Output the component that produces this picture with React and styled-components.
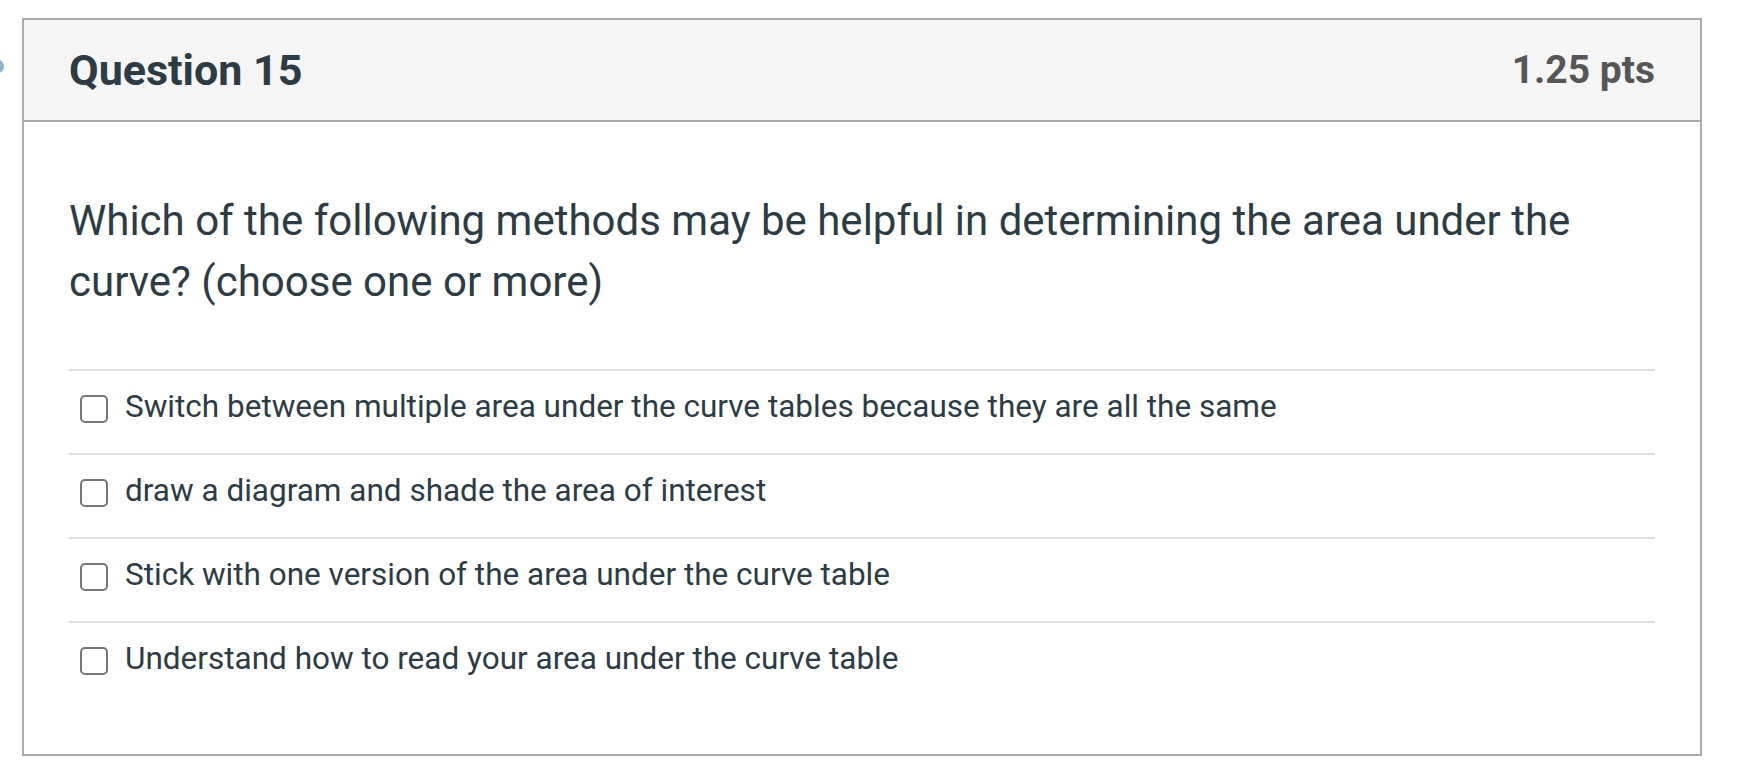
import styled, { createGlobalStyle } from 'styled-components';

const GlobalStyle = createGlobalStyle`
  html, body {
    margin: 0;
    padding: 0;
    background: #fff;
    font-family: Roboto, "Liberation Sans", sans-serif;
  }
`;

const Page = styled.div`
  position: relative;
  padding: 18px 0 0 22px;
`;

const EdgeMark = styled.span`
  position: absolute;
  left: -8px;
  top: 60px;
  width: 12px;
  height: 13px;
  border-radius: 50%;
  background: #8fb3cf;
`;

const Card = styled.section`
  width: 1680px;
  box-sizing: border-box;
  border: 2px solid #aaaaaa;
  background: #fff;
`;

const Header = styled.header`
  height: 100px;
  box-sizing: content-box;
  background: #f5f5f5;
  border-bottom: 2px solid #aaaaaa;
  padding: 0 45px;
  display: flex;
  align-items: center;
  justify-content: space-between;
`;

const Title = styled.h2`
  margin: 0;
  font-size: 43px;
  font-weight: 700;
  color: #2d3b45;
`;

const Points = styled.span`
  font-size: 39px;
  font-weight: 700;
  color: #565656;
`;

const Body = styled.div`
  padding: 68px 45px 49px;
`;

const QuestionText = styled.p`
  margin: 0 0 57px;
  font-size: 42px;
  line-height: 61px;
  color: #2d3b45;
`;

const Answers = styled.ul`
  list-style: none;
  margin: 0;
  padding: 0;
`;

const Answer = styled.li`
  height: 76px;
  padding-bottom: 6px;
  border-top: 2px solid #dddddd;
  display: flex;
  align-items: center;
  gap: 17px;
  padding-left: 11px;
  font-size: 31.5px;
  color: #2d3b45;
`;

const Box = styled.span`
  width: 28px;
  height: 28px;
  box-sizing: border-box;
  border: 2.5px solid #767676;
  border-radius: 5px;
  flex-shrink: 0;
`;

const Label = styled.span`
  margin-bottom: 6px;
`;

const answers = [
  'Switch between multiple area under the curve tables because they are all the same',
  'draw a diagram and shade the area of interest',
  'Stick with one version of the area under the curve table',
  'Understand how to read your area under the curve table',
];

export default function App() {
  return (
    <>
      <GlobalStyle />
      <Page>
        <EdgeMark />
        <Card>
          <Header>
            <Title>Question 15</Title>
            <Points>1.25 pts</Points>
          </Header>
          <Body>
            <QuestionText>
              Which of the following methods may be helpful in determining the area under the
              curve? (choose one or more)
            </QuestionText>
            <Answers>
              {answers.map((a) => (
                <Answer key={a}>
                  <Box />
                  <Label>{a}</Label>
                </Answer>
              ))}
            </Answers>
          </Body>
        </Card>
      </Page>
    </>
  );
}
